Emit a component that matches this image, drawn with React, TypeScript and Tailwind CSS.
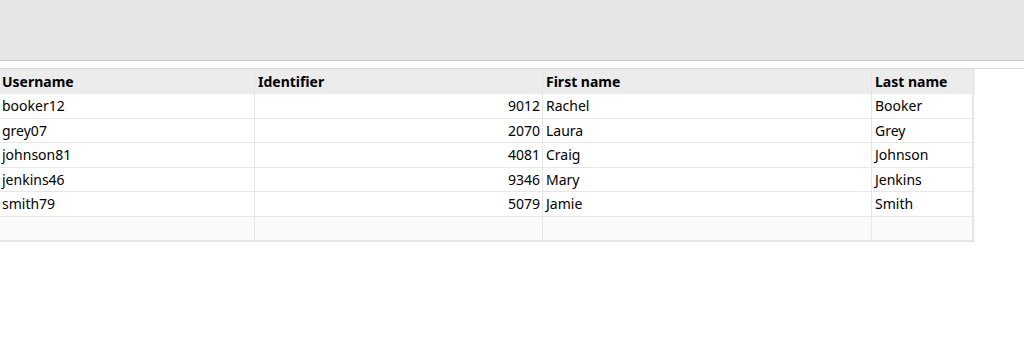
import React from 'react';

const rows = [
    { user: 'booker12', id: 9012, first: 'Rachel', last: 'Booker' },
    { user: 'grey07', id: 2070, first: 'Laura', last: 'Grey' },
    { user: 'johnson81', id: 4081, first: 'Craig', last: 'Johnson' },
    { user: 'jenkins46', id: 9346, first: 'Mary', last: 'Jenkins' },
    { user: 'smith79', id: 5079, first: 'Jamie', last: 'Smith' },
];

const cols = 'grid grid-cols-[254px_288px_329px_103px]';

const App: React.FC = () => {
    return (
        <div className="w-[1024px] h-[362px] bg-white text-black text-[14px]" style={{ fontFamily: '"Noto Sans", "Open Sans", sans-serif' }}>
            {/* toolbar strip */}
            <div className="h-[61px] bg-[#e6e6e6] border-b border-[#cfcfcf]"></div>
            <div className="h-[8px] bg-white border-b border-[#d9d9d9]"></div>

            <div className="w-[975px]">
                <div className={`${cols} h-[25px] bg-[#ececec] font-bold leading-[26px]`}>
                    <div className="pl-[2px]">Username</div>
                    <div className="pl-[3px] border-l border-[#e3e3e3]">Identifier</div>
                    <div className="pl-[3px] border-l border-[#e3e3e3]">First name</div>
                    <div className="pl-[3px] border-l border-[#e3e3e3] border-r">Last name</div>
                </div>
                {rows.map((r) => (
                    <div key={r.user} className={`${cols} h-[24.5px] border-b border-[#e6e6e6] leading-[24px]`}>
                        <div className="pl-[2px]">{r.user}</div>
                        <div className="pr-[2px] text-right border-l border-[#e6e6e6]">{r.id}</div>
                        <div className="pl-[3px] border-l border-[#e6e6e6]">{r.first}</div>
                        <div className="pl-[3px] border-l border-r-2 border-[#e6e6e6]">{r.last}</div>
                    </div>
                ))}
                <div className={`${cols} h-[25px] bg-[#fafafa] border-b-2 border-[#e6e6e6]`}>
                    <div></div>
                    <div className="border-l border-[#e6e6e6]"></div>
                    <div className="border-l border-[#e6e6e6]"></div>
                    <div className="border-l border-r-2 border-[#e6e6e6]"></div>
                </div>
            </div>
        </div>
    );
};

export default App;
